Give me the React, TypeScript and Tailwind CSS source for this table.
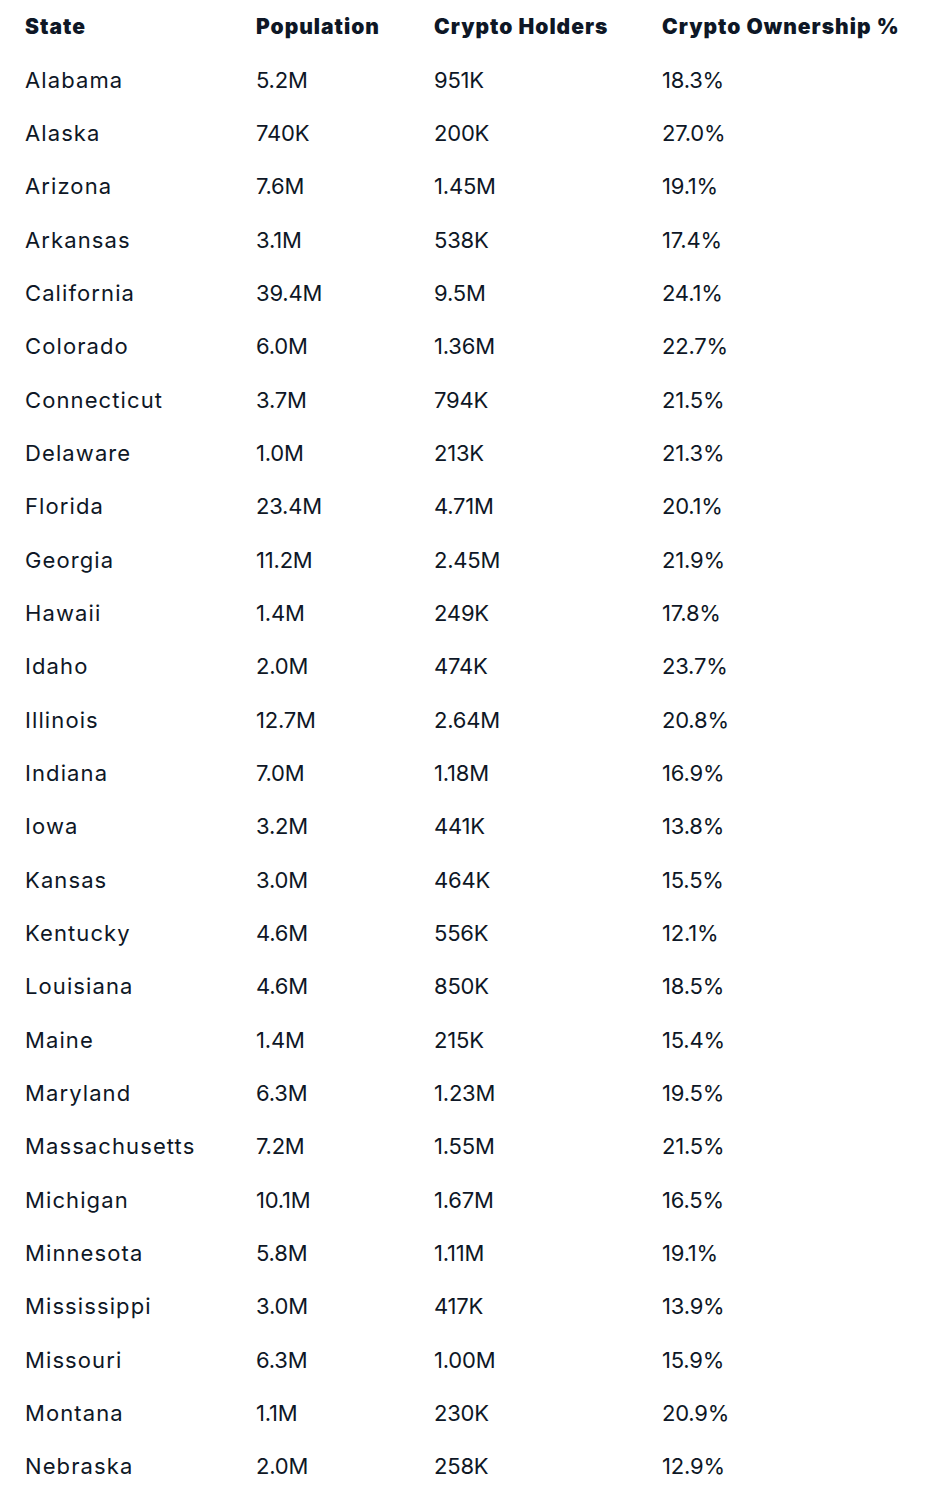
const rows: [string, string, string, string][] = [
  ["Alabama", "5.2M", "951K", "18.3%"],
  ["Alaska", "740K", "200K", "27.0%"],
  ["Arizona", "7.6M", "1.45M", "19.1%"],
  ["Arkansas", "3.1M", "538K", "17.4%"],
  ["California", "39.4M", "9.5M", "24.1%"],
  ["Colorado", "6.0M", "1.36M", "22.7%"],
  ["Connecticut", "3.7M", "794K", "21.5%"],
  ["Delaware", "1.0M", "213K", "21.3%"],
  ["Florida", "23.4M", "4.71M", "20.1%"],
  ["Georgia", "11.2M", "2.45M", "21.9%"],
  ["Hawaii", "1.4M", "249K", "17.8%"],
  ["Idaho", "2.0M", "474K", "23.7%"],
  ["Illinois", "12.7M", "2.64M", "20.8%"],
  ["Indiana", "7.0M", "1.18M", "16.9%"],
  ["Iowa", "3.2M", "441K", "13.8%"],
  ["Kansas", "3.0M", "464K", "15.5%"],
  ["Kentucky", "4.6M", "556K", "12.1%"],
  ["Louisiana", "4.6M", "850K", "18.5%"],
  ["Maine", "1.4M", "215K", "15.4%"],
  ["Maryland", "6.3M", "1.23M", "19.5%"],
  ["Massachusetts", "7.2M", "1.55M", "21.5%"],
  ["Michigan", "10.1M", "1.67M", "16.5%"],
  ["Minnesota", "5.8M", "1.11M", "19.1%"],
  ["Mississippi", "3.0M", "417K", "13.9%"],
  ["Missouri", "6.3M", "1.00M", "15.9%"],
  ["Montana", "1.1M", "230K", "20.9%"],
  ["Nebraska", "2.0M", "258K", "12.9%"],
];

const cols = "grid grid-cols-[231px_178px_228px_1fr] items-center h-[53.35px] pl-[25px] whitespace-nowrap";

export default function App() {
  return (
    <div className="w-[926px] bg-white text-[#0e1726] font-['Inter',sans-serif]">
      {/* Header */}
      <div className={`${cols} text-[21px] font-black tracking-[1px]`}>
        <div>State</div>
        <div>Population</div>
        <div>Crypto Holders</div>
        <div>Crypto Ownership %</div>
      </div>

      {/* Rows */}
      {rows.map(([state, pop, holders, pct]) => (
        <div key={state} className={`${cols} text-[22px]`}>
          <div className="tracking-[1.1px]">{state}</div>
          <div className="tracking-[-0.2px]">{pop}</div>
          <div className="tracking-[-0.2px]">{holders}</div>
          <div className="tracking-[-0.2px]">{pct}</div>
        </div>
      ))}
    </div>
  );
}
